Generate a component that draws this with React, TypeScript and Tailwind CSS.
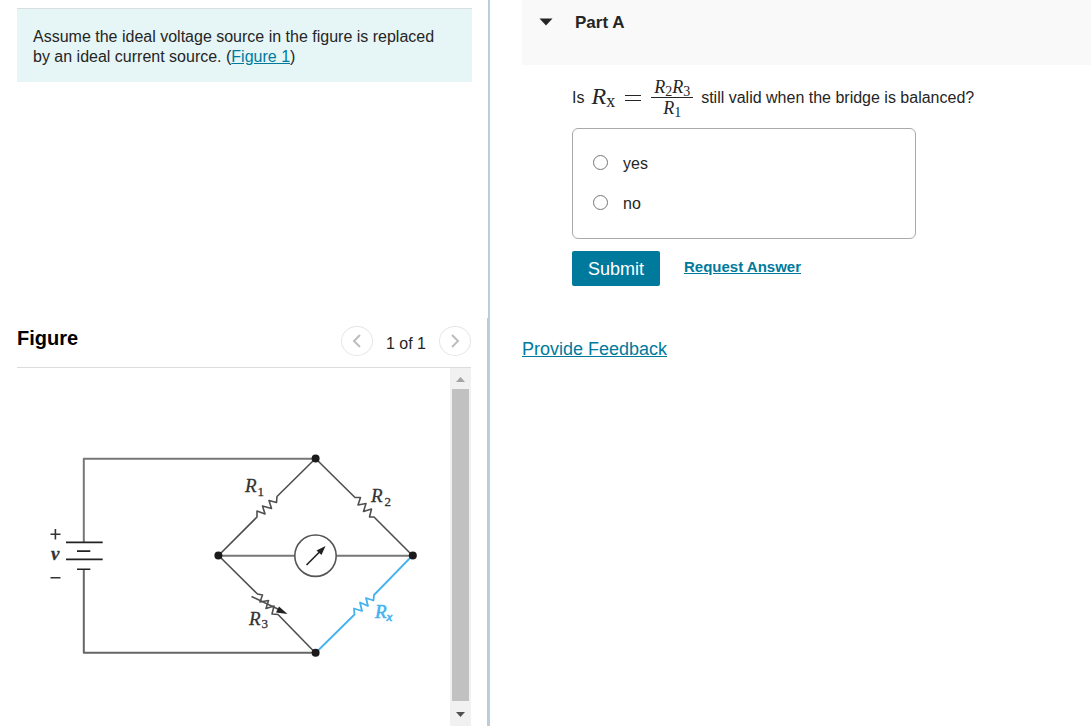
import { useState } from "react";
import type { ReactNode } from "react";

interface ChoiceProp {
  value: string;
  checked: boolean;
  onSelect: (value: string) => void;
}

const Sub = ({ children }: { children: ReactNode }) => (
  <span className="relative top-[3px] text-[14px] leading-none not-italic">{children}</span>
);

const Circuit = () => {
  return (
    <svg
      viewBox="17 368 433 358"
      className="block w-full"
      fill="none"
      stroke="#4f4f4f"
      strokeWidth="1.6"
      strokeLinejoin="round"
      role="img"
      aria-label="Wheatstone bridge"
    >
      {/* source loop */}
      <path d="M315.5 458.7H83.8V542" stroke="#777" strokeWidth="2" />
      <path d="M83.8 570V652.7H315.5" stroke="#666" strokeWidth="2" />
      <path d="M66 542.4H102.7M77 551.1H90.3M66 559.4H102.7M77 569.3H90.3" stroke="#222" />
      <path d="M50.5 534.2H60.5M55.4 529V539.4M50.5 577.7H60.5" stroke="#333" />

      {/* bridge arms */}
      <path d="M218.5 555.5L257 517V511L265 514L262.5 506L271.5 508.5L269 500.5L276.5 502.5L277 496.5L315.5 458.5" />
      <path d="M315.5 458.5L355 497.5H360.5L358 505L366 503.5L363.5 511.5L371.5 509L369.5 517H374L412.5 555.5" />
      <path d="M218.5 555.5L257.5 594L262.5 595L260 602L268.5 600.5L266 608.5L274 606L272 614L278 614.5L315.5 653" />
      <path
        d="M412.5 555.5L374 595L373.5 600.5L366 598L368 606L360 602.5L362 611L354 608.5L354.5 614.5L315.5 653"
        stroke="#45b2f0"
        strokeWidth="1.8"
      />
      <path d="M251.5 596.5L282 611" />
      <path d="M287.5 614L276 612.5L279 606.5Z" fill="#222" stroke="none" />

      {/* meter */}
      <path d="M218.5 555.7H294.5M336.5 555.7H412.5" stroke="#777" strokeWidth="2" />
      <circle cx="315.5" cy="555.7" r="20.7" stroke="#555" />
      <path d="M306.5 565L320 551.5" stroke="#222" />
      <path d="M325.5 546L321.5 555L316.5 550.5Z" fill="#222" stroke="none" />

      <g fill="#1c1a1b" stroke="none">
        <circle cx="315.6" cy="458.6" r="4" />
        <circle cx="218.4" cy="555.6" r="4" />
        <circle cx="412.8" cy="555.6" r="4" />
        <circle cx="315.6" cy="652.8" r="4" />
      </g>

      <g
        className="font-['Liberation_Serif',serif]"
        fill="#333"
        stroke="#333"
        strokeWidth="0.3"
        fontSize="19"
        fontStyle="italic"
      >
        <text x="51" y="560" fontSize="19" fontWeight="bold">v</text>
        <text x="245" y="492">R<tspan dx="1" dy="4" fontSize="13" fontStyle="normal">1</tspan></text>
        <text x="371" y="502">R<tspan dx="2" dy="4" fontSize="13" fontStyle="normal">2</tspan></text>
        <text x="249" y="625">R<tspan dx="1" dy="3" fontSize="13" fontStyle="normal">3</tspan></text>
        <text x="375" y="618" fill="#45b2f0" stroke="#45b2f0" strokeWidth="0.6">R<tspan dy="3" fontSize="13">x</tspan></text>
      </g>
    </svg>
  );
};

const Formula = () => {
  return (
    <span className="inline-flex items-center font-['Liberation_Serif',serif] italic">
      <span className="pb-1 text-2xl leading-6">R<Sub><span className="text-[18px]">x</span></Sub></span>
      <svg className="ml-[10px] h-2 w-4" viewBox="0 0 16 8" stroke="#252525" strokeWidth="1" aria-hidden="true">
        <path d="M0 1.5H16M0 6.5H16" />
      </svg>
      <span className="ml-[10px] flex flex-col items-center text-[18px] leading-5">
        <span className="border-b border-[#252525] px-[3px]">R<Sub>2</Sub>R<Sub>3</Sub></span>
        <span>R<Sub>1</Sub></span>
      </span>
    </span>
  );
};

const Choice = ({ value, checked, onSelect }: ChoiceProp) => {
  return (
    <label className="flex h-10 items-center gap-[15px]">
      <input
        type="radio"
        name="answer"
        value={value}
        checked={checked}
        onChange={() => onSelect(value)}
        className="mb-[3px] size-[15px] appearance-none rounded-full border border-[#767676] bg-white checked:border-4 checked:border-[#007a9c]"
      />
      {value}
    </label>
  );
};

const PagerButton = ({ label, d }: { label: string; d: string }) => {
  return (
    <button
      type="button"
      aria-label={label}
      className="flex h-[30px] w-8 items-center justify-center rounded-[50%] border border-[#e6e6e6] bg-white"
    >
      <svg className="size-4" viewBox="0 0 16 16" fill="none" stroke="#bdbdbd" strokeWidth="2" aria-hidden="true">
        <path d={d} />
      </svg>
    </button>
  );
};

const FigurePanel = () => {
  return (
    <section className="flex min-h-0 flex-1 flex-col border-r-3 border-[#b9cddc] pr-4 pl-[17px]">
      <header className="flex shrink-0 items-start justify-between border-b border-[#dcdcdc] pt-2 pb-[11px]">
        <h2 className="text-xl leading-6 font-bold text-black">Figure</h2>
        <div className="flex items-center gap-[13px]">
          <PagerButton label="Previous figure" d="M11 2L5 8L11 14" />
          <span className="pt-[6px]">1 of 1</span>
          <PagerButton label="Next figure" d="M5 2L11 8L5 14" />
        </div>
      </header>
      <div className="flex min-h-0 flex-1">
        <div className="min-w-0 flex-1 overflow-hidden">
          <Circuit />
        </div>
        <div className="flex w-[21px] flex-col items-center bg-[#f1f1f1]">
          <svg className="h-[21px] w-[9px] shrink-0" viewBox="0 0 9 21" fill="#a3a3a3" aria-hidden="true">
            <path d="M0 14L4.5 9L9 14Z" />
          </svg>
          <div className="w-[17px] flex-1 bg-[#c1c1c1]" />
          <svg className="h-[25px] w-[9px] shrink-0" viewBox="0 0 9 25" fill="#505050" aria-hidden="true">
            <path d="M0 11L4.5 16L9 11Z" />
          </svg>
        </div>
      </div>
    </section>
  );
};

const App = () => {
  const [answer, setAnswer] = useState("");

  return (
    <div className="flex h-screen bg-white font-['Liberation_Sans',Arial,sans-serif] text-base leading-5 text-[#252525]">
      <aside className="flex w-[490px] shrink-0 flex-col">
        <div className="h-[318px] shrink-0 border-r-2 border-[#b9cddc] pt-2 pr-4 pl-[17px]">
          <p className="border-t border-[#d9dfdf] bg-[#e6f6f7] pt-[18px] pr-6 pb-[15px] pl-4">
            Assume the ideal voltage source in the figure is replaced by an ideal current source. (
            <a href="#figure" className="text-[#007a9c] underline">Figure 1</a>)
          </p>
        </div>
        <FigurePanel />
      </aside>

      <main className="min-w-0 flex-1 pl-8">
        <header className="h-[65px] bg-[#f9f9f9] px-4 pt-[13px]">
          <button type="button" aria-expanded="true" className="flex items-center gap-[22px] text-[17px] leading-5 font-bold">
            <svg className="mb-[2px] h-2 w-[15px]" viewBox="0 0 15 8" fill="#252525" aria-hidden="true">
              <path d="M1.5 0.5H14.5L8 7.5Z" />
            </svg>
            Part A
          </button>
        </header>

        <form className="pl-[50px]" onSubmit={(e) => e.preventDefault()}>
          <div id="question" className="flex items-center gap-2 pt-3">
            <span className="flex items-center gap-[7px]">Is <Formula /></span>
            <span>still valid when the bridge is balanced?</span>
          </div>
          <fieldset
            aria-labelledby="question"
            className="mt-[10px] h-[111px] w-[344px] rounded-md border border-[#a9a9a9] px-5 pt-[15px]"
          >
            <Choice value="yes" checked={answer === "yes"} onSelect={setAnswer} />
            <Choice value="no" checked={answer === "no"} onSelect={setAnswer} />
          </fieldset>
          <div className="mt-3 flex items-center gap-6">
            <button type="submit" className="h-[35px] rounded-xs bg-[#007a9c] px-4 text-lg text-white">
              Submit
            </button>
            <a href="#answer" className="pb-1 text-[15px] leading-5 font-bold text-[#007a9c] underline">Request Answer</a>
          </div>
        </form>

        <a href="#feedback" className="mt-[53px] inline-block text-lg leading-5 text-[#007a9c] underline">
          Provide Feedback
        </a>
      </main>
    </div>
  );
};

export default App;
